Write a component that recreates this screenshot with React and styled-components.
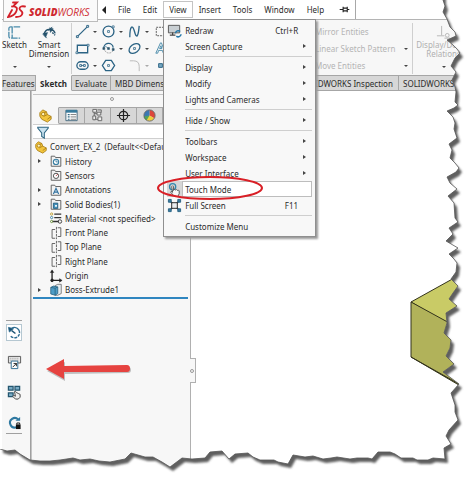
import React from "react";
import styled, { createGlobalStyle, css } from "styled-components";

const MENU_GROUPS = [
    [
        { label: "Redraw", shortcut: "Ctrl+R", icon: "redraw" },
        { label: "Screen Capture", sub: true },
    ],
    [
        { label: "Display", sub: true },
        { label: "Modify", sub: true },
        { label: "Lights and Cameras", sub: true },
    ],
    [{ label: "Hide / Show", sub: true }],
    [
        { label: "Toolbars", sub: true },
        { label: "Workspace", sub: true },
        { label: "User Interface", sub: true },
        { label: "Touch Mode", icon: "touch", active: true },
        { label: "Full Screen", shortcut: "F11", icon: "full" },
    ],
    [{ label: "Customize Menu" }],
];

const TREE = [
    { label: "History", icon: "history", open: true },
    { label: "Sensors", icon: "sensors" },
    { label: "Annotations", icon: "annotations", open: true },
    { label: "Solid Bodies(1)", icon: "solid", open: true },
    { label: "Material <not specified>", icon: "material" },
    { label: "Front Plane", icon: "plane" },
    { label: "Top Plane", icon: "plane" },
    { label: "Right Plane", icon: "plane" },
    { label: "Origin", icon: "origin" },
    { label: "Boss-Extrude1", icon: "boss", open: true },
];

const SKETCH_TOOLS = [
    "line", "circle", "spline", "select",
    "rect", "arc", "ellipse", "text",
    "slot", "polygon", "fillet", "point",
];

const NO_CARET = ["polygon", "select", "text", "point"];

const BLUE = "#2b6384";

const GLYPHS = {
    sketch: <path d="M14 2H4Q2 2 2 4V12Q2 14 4 14H14M5.500 2V14" fill="none" stroke="#4b8cab" strokeWidth="1.4" strokeDasharray="7 1" />,
    dimension: (
        <g fill="none" stroke="#26536d" strokeWidth="1.5">
            <path d="M2 10Q4 4 9 5Q13 5 14 9" />
            <path d="M5 14 1 10M7 6 11 2" strokeWidth="1" />
            <path d="M1 9 6 8 4 13zM8 3 12 4 9 8z" fill="#26536d" strokeWidth=".5" />
            <path d="M11 8 14 11" strokeDasharray="2 1" />
        </g>
    ),
    line: (
        <g stroke={BLUE} fill="#fff">
            <path d="M3 13 13 3" strokeWidth="1.3" />
            <path d="M1.500 12.500h2v2h-2zM12.500 1.500h2v2h-2z" />
        </g>
    ),
    circle: (
        <g stroke={BLUE} fill="none">
            <circle cx="8" cy="8" r="5.8" strokeWidth="1.4" />
            <path d="M7 7h2v2H7zM12 2h2v2h-2z" fill="#fff" strokeWidth=".8" />
        </g>
    ),
    spline: <path d="M3 14C3 2 6 0 8 8S12 14 13 2" stroke={BLUE} fill="none" strokeWidth="1.4" />,
    select: <path d="M3.5 3.5h9v9h-9z" stroke="#555" fill="none" strokeDasharray="2 1" />,
    rect: (
        <g stroke={BLUE} fill="#fff">
            <path d="M2.500 4.500h11v8h-11z" fill="none" strokeWidth="1.4" />
            <path d="M1 11.500h2v2H1zM13 3.500h2v2h-2z" strokeWidth=".8" />
        </g>
    ),
    arc: (
        <g stroke={BLUE} fill="none">
            <path d="M3 8a5 5 0 0 1 10-1" strokeWidth="1.4" />
            <path d="M4 10a5 5 0 0 0 9 0" stroke="#999" strokeDasharray="2 1" />
            <path d="M7 7h2v2H7zM2 7h2v2H2zM12 8h2v2h-2zM8 8 4 5" fill="#444" strokeWidth=".7" />
        </g>
    ),
    ellipse: (
        <g stroke={BLUE} fill="none">
            <ellipse cx="8" cy="8" rx="6.5" ry="4.4" transform="rotate(-38 8 8)" strokeWidth="1.4" />
            <path d="M7 7h2v2H7z" strokeWidth=".8" />
        </g>
    ),
    text: <path d="M3 13 8 2h1l4 11h-2l-1-3H6l-1 3zM7 8h2.500L8.500 5z" stroke="#4b8cab" fill="none" />,
    slot: (
        <g stroke={BLUE} fill="none">
            <rect x="2" y="4" width="12" height="8" rx="4" strokeWidth="1.4" />
            <path d="M5 7h2v2H5zM9 7h2v2H9zM7 8h2" strokeWidth=".9" />
        </g>
    ),
    polygon: (
        <g stroke={BLUE} fill="none">
            <path d="M5 2.500h6l3.500 5.500-3.500 5.500H5L1.500 8z" strokeWidth="1.4" />
            <path d="M7 7h2v2H7z" strokeWidth=".8" />
        </g>
    ),
    fillet: <path d="M3 3H7Q13 3 13 9V14" stroke="#b9b9b9" fill="none" />,
    point: <path d="M6 6h4v4H6z" fill="#78a9c2" stroke={BLUE} />,
    relations: (
        <g stroke="#b5b5b5" fill="none">
            <path d="M6 1V11M1 11.500H9" />
            <circle cx="12" cy="11" r="2" />
            <path d="M9 14h6" />
        </g>
    ),
    part: (
        <g stroke="#a67b13" strokeWidth=".9">
            <path d="M2 5 5 2 9 4 10 7 14 9V12L10 15 4 12Q1 9 2 5z" fill="#f2c43c" />
            <path d="M5 6 9 4M6 9 10 7M10 12 14 9" fill="none" />
            <circle cx="5.500" cy="6.500" r="1.800" fill="#fff3bd" />
        </g>
    ),
    list: (
        <g>
            <path d="M2 2.500h12v11H2z" fill="#fff" stroke="#44697e" />
            <path d="M2 2h12v3H2z" fill="#397b9c" />
            <path d="M4 7h2M4 9.500h2M4 12h2" stroke="#2e6682" strokeWidth="1.3" />
            <path d="M7 7h6M7 9.500h6M7 12h6" stroke="#777" />
        </g>
    ),
    config: (
        <g fill="#eee" stroke="#666">
            <path d="M4.500 2.500V13M4.500 6H8M4.500 12H9" fill="none" />
            <path d="M3 1.500h4v3H3zM7.500 4.500h4v3h-4zM3 8.500h3v4H3zM8.500 9.500h4v4h-4z" />
            <path d="M8 2h4v3" fill="none" />
        </g>
    ),
    target: (
        <g stroke="#222" fill="none" strokeWidth="1.3">
            <circle cx="8" cy="8" r="4.500" />
            <path d="M8 1v14M1 8h14" />
        </g>
    ),
    palette: (
        <g>
            <path d="M8 8V2a6 6 0 0 1 5 9z" fill="#dd463b" />
            <path d="M8 8 13 11A6 6 0 0 1 3 11z" fill="#f0cf3c" />
            <path d="M8 8 3 11A6 6 0 0 1 8 2z" fill="#3b78b3" />
            <path d="M8 8 2 9a6 6 0 0 0 3 4z" fill="#51a35b" />
            <circle cx="8" cy="8" r="6" fill="none" stroke="#555" strokeWidth=".8" />
        </g>
    ),
    funnel: <path d="M2 2.500h12v1L9.500 9v6l-3-2V9L2 3.500z" fill="#c9e2ef" stroke="#2e6682" strokeWidth="1.200" />,
    history: (
        <g stroke="#555" fill="none">
            <path d="M2.500 14V2.500h4l1 1.500h6v10z" fill="#f2f2f2" />
            <circle cx="8" cy="9" r="3" fill="#fff" stroke="#3a7fa2" strokeWidth="1.3" />
            <path d="M8 7v2h2" stroke="#3a7fa2" />
        </g>
    ),
    sensors: (
        <g stroke="#555" fill="none">
            <path d="M2.500 14V2.500h4l1 1.500h6v10z" fill="#f2f2f2" />
            <circle cx="8" cy="9" r="3" fill="#fff" stroke="#444" />
            <path d="M8 9 10 7" stroke="#b03030" />
        </g>
    ),
    annotations: (
        <g stroke="#555" fill="none">
            <path d="M2.500 14V2.500h4l1 1.500h6v10z" fill="#f2f2f2" />
            <path d="M5 12.500 8 6l3 6.500M6 10.500h4" stroke="#3272a0" strokeWidth="1.3" />
        </g>
    ),
    solid: (
        <g stroke="#555" fill="none">
            <path d="M2.500 14V2.500h4l1 1.500h6v10z" fill="#f2f2f2" />
            <path d="M5 7h5v6H5z" fill="#4593bd" stroke="#235d7e" />
            <path d="M7 9h2v2H7z" fill="#fff" stroke="none" />
        </g>
    ),
    material: (
        <g stroke="#333" fill="none">
            <path d="M6 3.500h8M6 7.500h8M4 12h7" strokeWidth="1.500" />
            <circle cx="3" cy="3.500" r="1.300" stroke="#bd9a28" />
            <circle cx="3" cy="7.500" r="1.300" stroke="#3a7fa2" />
            <circle cx="3" cy="12" r="1.300" stroke="#678d33" />
            <circle cx="12.500" cy="12" r="2" />
        </g>
    ),
    plane: (
        <g stroke="#555" fill="none">
            <path d="M3.500 4V14M3.500 4H7M3.500 14H7M13.500 2V12M13.500 2H10M13.500 12H10" />
            <path d="M8.500 1V15" strokeDasharray="3 1" />
        </g>
    ),
    origin: (
        <g stroke="#222" fill="#222">
            <path d="M3.500 2V13H14" fill="none" strokeWidth="1.500" />
            <path d="M1.500 4 3.500 1 5.500 4zM12 11 15 13 12 15z" strokeWidth=".5" />
            <circle cx="3.500" cy="13" r="1.500" />
        </g>
    ),
    boss: (
        <g stroke="#285f7d" strokeWidth=".9">
            <path d="M7 3 10 1.500H14V12L10 14H7z" fill="#e6edf1" stroke="#666" />
            <path d="M2 5 5 3.500 10 4.500V12L7 14 2 12.500z" fill="#4e9dc7" />
            <path d="M2 5 7 6 10 4.500M7 6V14" fill="none" />
        </g>
    ),
    redraw: (
        <g>
            <path d="M1.500 2.500h12v8h-12z" fill="#c9cfd3" stroke="#555" />
            <path d="M3 13h6M6 10v3" stroke="#444" strokeWidth="1.300" />
            <path d="M9 11a3 3 0 0 1 5-2M15 12a3 3 0 0 1-5 2" fill="none" stroke="#2478a9" strokeWidth="1.600" />
        </g>
    ),
    touch: (
        <g stroke="#444" fill="#f7f7f7" strokeWidth=".9">
            <circle cx="6" cy="5" r="3.300" fill="none" stroke="#3187ad" strokeWidth="1.400" />
            <path d="M5 5q1-2 2 0v4l1-1 1 .5 1-.5 1 1 1-.5 1 1v3l-1.500 3H8L4 11q0-2 2 0z" />
        </g>
    ),
    full: (
        <g stroke="#222" fill="#3c7da0">
            <path d="M4 4 12 12M12 4 4 12" strokeWidth="1.200" />
            <path d="M5 5h6v6H5z" fill="#e9edf0" />
            <path d="M1.500 1.500h3v3h-3zM11.500 1.500h3v3h-3zM1.500 11.500h3v3h-3zM11.500 11.500h3v3h-3z" stroke="#2b6384" />
        </g>
    ),
    undo: (
        <g stroke="#2d6c91" fill="none" strokeWidth="1.500">
            <path d="M5 3.500A5.500 5.500 0 1 1 4 12" strokeDasharray="12 1 3 1 3 1" />
            <path d="M1.500 2.500 2.500 7.500 7 4z" fill="#1e5474" strokeWidth=".8" />
            <path d="M5 6 9 9" stroke="#1e5474" strokeWidth="1.500" />
        </g>
    ),
    toolbar: (
        <g stroke="#555" fill="#e8e8e8">
            <path d="M1.500 1.500h13v7h-13z" />
            <path d="M3 3.500h10M3 5.500h10" stroke="#999" strokeDasharray="1 1" />
            <path d="M4.500 6.500h7v8h-7z" fill="#fff" stroke="#2d6c91" />
            <path d="M6 13 10 9M7 9h3v3" fill="none" stroke="#222" />
        </g>
    ),
    grid: (
        <g stroke="#24566f" fill="#78aac4">
            <path d="M1.500 1.500h5v4h-5zM8.500 1.500h5v4h-5zM1.500 8.500h5v4h-5z" strokeWidth="1.300" />
            <path d="M8 7q1-1 2 1l2 1 2 1v3l-2 2h-3l-3-3q1-2 3 0z" fill="#eee" stroke="#444" />
        </g>
    ),
    lock: (
        <g>
            <path d="M12 5A5 5 0 1 0 10 13" fill="none" stroke="#2f79a1" strokeWidth="2.200" />
            <path d="M9 6h5V2z" fill="#2f79a1" />
            <path d="M9.500 10h5v5h-5z" fill="#111" />
            <path d="M10.500 10V8.500h3V10" fill="none" stroke="#111" />
        </g>
    ),
    pin: <path d="M1 8H6M6 4V12M6 6H12V10H6M12 4V12M12 8h3" fill="none" stroke="#222" strokeWidth="1.600" />,
};

// right side goes down, then the bottom edge back to the left
const TORN_EDGE =
    "M0 -9H443V0L445 6 443 12 447 19 450 27 455 32 456 36 447 40 453 45 457 49 460 53 455 58 451 66 456 72 452 80 455 87 456 92 455 102 458 105 " +
    "454 108 447 111 453 117 455 123 454 129 457 138 449 144 452 150 450 158 455 163 459 168 456 172 447 177 450 183 457 189 448 196 454 203 455 218 458 222 449 228 453 234 " +
    "446 241 458 248 449 254 454 259 457 263 456 272 451 279 458 286 453 293 449 299 457 306 446 313 447 323 444 333 451 340 450 348 446 356 454 364 443 372 459 384 451 393 455 405 " +
    "455 412 458 420 449 430 446 436 451 444 444 448 445 459 433 458 428 460 417 460 413 458 401 458 395 454 390 452 378 452 372 459 368 458 357 458 350 459 337 457 331 458 323 459 313 456 305 457 " +
    "293 455 288 464 278 462 274 460 260 460 253 457 248 453 235 454 229 459 222 451 210 452 205 458 192 459 182 458 170 467 162 462 153 457 145 457 131 453 125 459 " +
    "110 462 99 461 90 459 80 460 73 458 60 460 50 461 40 461 30 460 20 454 15 450 7 451 0 449Z";

function Glyph({ name, size = 14 }) {
    return (
        <svg width={size} height={size} viewBox="0 0 16 16" aria-hidden="true">
            {GLYPHS[name]}
        </svg>
    );
}

function ViewMenu() {
    return (
        <MenuPanel>
            {MENU_GROUPS.map((group, i) => (
                <MenuGroup key={i}>
                    {group.map((item) => (
                        <MenuItem key={item.label} type="button">
                            <IconCell $active={item.active}>
                                {item.icon && <Glyph name={item.icon} size={15} />}
                            </IconCell>
                            <ItemBody $active={item.active}>
                                <span>{item.label}</span>
                                {item.shortcut && <Shortcut>{item.shortcut}</Shortcut>}
                                {item.sub && <Arrow />}
                            </ItemBody>
                            {item.active && (
                                <Ring viewBox="0 0 108 26" aria-hidden="true">
                                    <ellipse cx="54" cy="13" rx="52" ry="11" fill="none" stroke="#d91f26" strokeWidth="2" />
                                </Ring>
                            )}
                        </MenuItem>
                    ))}
                </MenuGroup>
            ))}
        </MenuPanel>
    );
}

function Header() {
    return (
        <TopBar>
            <Logo>
                <svg width="20" height="20" viewBox="0 0 20 20" aria-hidden="true">
                    <g fill="none" stroke="#d3222b" strokeWidth="1.800" strokeLinecap="round">
                        <path d="M6 1.500H10L7 4.500M5 5.500Q12 5 9 11Q7 15 1 16L5 9" />
                        <path d="M18 5.500Q13 4.500 12.500 7.500C12.500 10 17 10 15 13.500Q14 16 9 16" />
                    </g>
                </svg>
                <Brand><b>SOLID</b>WORKS</Brand>
            </Logo>
            <Collapse type="button" aria-label="Collapse menu" />
            <MenuBar>
                <MenuButton type="button">File</MenuButton>
                <MenuButton type="button">Edit</MenuButton>
                <MenuAnchor>
                    <MenuButton type="button" $open>View</MenuButton>
                    <ViewMenu />
                </MenuAnchor>
                <MenuButton type="button">Insert</MenuButton>
                <MenuButton type="button">Tools</MenuButton>
                <MenuButton type="button">Window</MenuButton>
                <MenuButton type="button">Help</MenuButton>
            </MenuBar>
            <PinButton type="button" aria-label="Pin menu"><Glyph name="pin" size={11} /></PinButton>
        </TopBar>
    );
}

function Ribbon() {
    return (
        <RibbonBar>
            <BigTool type="button" $width={25}>
                <Glyph name="sketch" size={15} />
                <span>Sketch</span>
                <Caret />
            </BigTool>
            <BigTool type="button" $width={44}>
                <Glyph name="dimension" size={15} />
                <span>Smart Dimension</span>
                <Caret />
            </BigTool>
            <ToolGrid>
                {SKETCH_TOOLS.map((name) => (
                    <SmallTool key={name} type="button" aria-label={name}>
                        <Glyph name={name} size={15} />
                        {!NO_CARET.includes(name) && <Caret $dim={name === "fillet"} />}
                    </SmallTool>
                ))}
            </ToolGrid>
            <EntityList>
                <EntityTool type="button">Mirror Entities</EntityTool>
                <EntityTool type="button">Linear Sketch Pattern <Caret /></EntityTool>
                <EntityTool type="button">Move Entities <Caret /></EntityTool>
            </EntityList>
            <BigTool type="button" $width={61} $disabled>
                <Glyph name="relations" size={15} />
                <span>Display/Delete Relations</span>
                <Caret />
            </BigTool>
        </RibbonBar>
    );
}

function FeatureTree() {
    return (
        <Panel>
            <PanelGrip><Dot /></PanelGrip>
            <PanelTabs>
                {["part", "list", "config", "target", "palette"].map((name, i) => (
                    <PanelTab key={name} type="button" aria-label={name} $active={i === 0}>
                        <Glyph name={name} size={15} />
                    </PanelTab>
                ))}
            </PanelTabs>
            <Filter>
                <Glyph name="funnel" />
                <input type="text" aria-label="Filter tree" />
            </Filter>
            <RootNode>
                <Glyph name="part" />
                Convert_EX_2&nbsp; (Default&lt;&lt;Default
            </RootNode>
            <Tree>
                {TREE.map((node) => (
                    <Node key={node.label}>
                        <Toggle>{node.open && <Arrow />}</Toggle>
                        <Glyph name={node.icon} />
                        <span>{node.label}</span>
                    </Node>
                ))}
            </Tree>
            <RollbackBar />
            <PointerArrow viewBox="0 0 90 28" aria-hidden="true">
                <path d="M3 14 21 5V11L84 10Q87 10 87 13T84 16L21 17V24Z" fill="#999" opacity=".6" />
                <path d="M2 12 20 2V9L83 8Q86 8 86 11.500T83 15L20 15V22Z" fill="#e64340" />
            </PointerArrow>
            <Splitter type="button" aria-label="Collapse panel"><Dot /></Splitter>
        </Panel>
    );
}

function TornEdge() {
    return (
        <EdgeOverlay viewBox="0 0 474 479" preserveAspectRatio="none" aria-hidden="true">
            <defs>
                <clipPath id="outside">
                    <path d={"M-9 -9H490V490H-9Z" + TORN_EDGE} clipRule="evenodd" />
                </clipPath>
                <filter id="soft" x="-5%" y="-5%" width="110%" height="110%">
                    <feGaussianBlur stdDeviation="1" />
                </filter>
            </defs>
            <g clipPath="url(#outside)">
                <path d="M-9 -9H490V490H-9Z" fill="#fff" />
                <g filter="url(#soft)">
                    <path d={TORN_EDGE} fill="#5e5e5e" transform="translate(3 4)" />
                </g>
            </g>
            <path d={TORN_EDGE} fill="none" stroke="#555" strokeWidth=".8" />
            <path d="M0 0H2V449H0Z" fill="#fff" />
        </EdgeOverlay>
    );
}

export default function App() {
    return (
        <Frame>
            <GlobalStyle />
            <Header />
            <Ribbon />
            <Tabs>
                <Tab type="button" $left>Features</Tab>
                <Tab type="button" $active>Sketch</Tab>
                <Tab type="button">Evaluate</Tab>
                <Tab type="button" $left>MBD Dimensions</Tab>
                <Tab type="button">SOLIDWORKS Inspection</Tab>
                <Tab type="button" $left>SOLIDWORKS</Tab>
            </Tabs>
            <Workspace>
                <Dock>
                    <DockGroup>
                        <DockButton type="button" aria-label="Undo" $active><Glyph name="undo" size={15} /></DockButton>
                        <DockButton type="button" aria-label="Toolbar"><Glyph name="toolbar" size={15} /></DockButton>
                        <DockButton type="button" aria-label="Multi select"><Glyph name="grid" size={15} /></DockButton>
                        <DockButton type="button" aria-label="Lock rotation"><Glyph name="lock" size={15} /></DockButton>
                    </DockGroup>
                </Dock>
                <FeatureTree />
                <Viewport>
                    <Model viewBox="0 0 64 110" aria-hidden="true">
                        <g stroke="#33331c" strokeLinejoin="round">
                            <path d="M1 26 46 1H60V57H53Z" fill="#c9cb66" />
                            <path d="M1 26 54 55V112L1 81Z" fill="#b1b25a" />
                            <path d="M1 81 49 108" fill="none" />
                        </g>
                    </Model>
                </Viewport>
            </Workspace>
            <TornEdge />
        </Frame>
    );
}

const GlobalStyle = createGlobalStyle`
    * {
        box-sizing: border-box;
    }

    body {
        margin: 0;
        background: #fff;
        color: #2b2b2b;
        font-family: "Noto Sans", "Open Sans", sans-serif;
        font-size: 8px;
        line-height: 9px;
    }

    button, input {
        margin: 0;
        padding: 0;
        border: none;
        background: none;
        color: inherit;
        font: inherit;
    }

    svg {
        display: block;
        flex: none;
    }
`;

const Frame = styled.div`
    position: relative;
    display: flex;
    flex-direction: column;
    min-height: 100vh;
    overflow: hidden;
    background: #fff;
`;

const TopBar = styled.header`
    display: flex;
    height: 20px;
    padding-left: 3px;
    border-bottom: 1px solid #b4b4b4;
`;

const Logo = styled.div`
    position: relative;
    z-index: 2;
    display: flex;
    align-items: center;
    gap: 2px;
    width: 95px;
    height: 22px;
    padding-left: 3px;
    border: 1px solid #bcbcbc;
    border-top: none;
    background: #fafafa;
`;

const Brand = styled.span`
    padding-top: 3px;
    color: #cf2a31;
    font-family: "Open Sans", sans-serif;
    font-size: 10px;
    font-style: italic;

    b {
        font-weight: 800;
    }
`;

const Collapse = styled.button`
    align-self: center;
    margin: 0 6px 0 4px;
    border: 4px solid transparent;
    border-left: none;
    border-right: 4px solid #222;
`;

const MenuBar = styled.nav`
    display: flex;
    align-items: center;
`;

const MenuAnchor = styled.div`
    position: relative;
`;

const MenuButton = styled.button`
    height: 17px;
    padding: 0 5px;
    border: 1px solid ${({ $open }) => ($open ? "#c4c4c4" : "transparent")};
    background: ${({ $open }) => ($open ? "#fff" : "none")};
`;

const PinButton = styled.button`
    display: flex;
    align-items: center;
    padding: 0 5px 0 9px;
    border-right: 1px solid #a8a8a8;
`;

const MenuPanel = styled.div`
    position: absolute;
    z-index: 3;
    top: 18px;
    left: 0;
    width: 153px;
    padding: 2px 3px;
    border: 1px solid #8f8f8f;
    background: #f8f8f8;
    box-shadow: 2px 2px 2px #9a9a9a;
`;

const MenuGroup = styled.div`
    & + &::before {
        content: "";
        display: block;
        height: 1px;
        margin: 2px 0 2px 18px;
        background: #cfcfcf;
    }
`;

const MenuItem = styled.button`
    position: relative;
    display: flex;
    width: 100%;
    height: 16px;
    text-align: left;
`;

const IconCell = styled.span`
    display: flex;
    align-items: center;
    justify-content: center;
    width: 15px;
    background: ${({ $active }) => ($active ? "#d6d6d6" : "none")};
`;

const ItemBody = styled.span`
    flex: 1;
    display: flex;
    align-items: center;
    justify-content: space-between;
    padding: 0 5px 0 2px;
    border: 1px solid transparent;

    ${({ $active }) => $active && css`
        border-color: #bdbdbd;
        background: #fff;
    `}
`;

const Shortcut = styled.span`
    margin-right: 8px;
`;

const Arrow = styled.i`
    border: 2px solid transparent;
    border-left: 3px solid #444;
    border-right: none;
`;

const Ring = styled.svg`
    position: absolute;
    top: -6px;
    left: -11px;
    width: 108px;
    height: 26px;
`;

const Caret = styled.i`
    border: 2px solid transparent;
    border-top-color: ${({ $dim }) => ($dim ? "#aaa" : "#444")};
    border-bottom: none;
`;

const RibbonBar = styled.section`
    display: flex;
    height: 55px;
    padding: 3px 0 1px 2px;
    background: #f7f7f7;
`;

const BigTool = styled.button`
    display: flex;
    flex-direction: column;
    align-items: center;
    flex: none;
    width: ${({ $width }) => $width}px;
    padding-top: 2px;
    color: ${({ $disabled }) => ($disabled ? "#b0b0b0" : "inherit")};

    ${Caret} {
        margin-top: auto;
        margin-bottom: 6px;
    }
`;

const ToolGrid = styled.div`
    display: grid;
    grid-template-columns: repeat(4, 26px);
    grid-template-rows: repeat(3, 17px);
    border-left: 1px solid #cfcfcf;
    padding-left: 3px;
`;

const SmallTool = styled.button`
    display: flex;
    align-items: center;
    gap: 3px;
`;

const EntityList = styled.div`
    display: grid;
    grid-template-rows: repeat(3, 17px);
    width: 98px;
    margin-left: auto;
    border-right: 1px solid #cfcfcf;
`;

const EntityTool = styled.button`
    display: flex;
    align-items: center;
    justify-content: space-between;
    padding-right: 4px;
    color: #b4b4b4;
`;

const Tabs = styled.nav`
    display: grid;
    grid-template-columns: 36px 36px 39px 1fr 104px 75px;
    height: 16px;
    padding-left: 0;
`;

const Tab = styled.button`
    overflow: hidden;
    padding-left: ${({ $left }) => ($left ? 4 : 0)}px;
    border: 1px solid #a6a6a6;
    border-left: none;
    background: #d7d7d7;
    text-align: ${({ $left }) => ($left ? "left" : "center")};
    white-space: nowrap;

    &:first-child {
        padding-left: 2px;
    }

    ${({ $active }) => $active && css`
        border-top-color: #f7f7f7;
        border-bottom-color: #f7f7f7;
        background: #f7f7f7;
        font-weight: 700;
    `}
`;

const Workspace = styled.main`
    flex: 1;
    display: flex;
`;

const Dock = styled.aside`
    width: 31px;
    padding: 229px 8px 0 6px;
    border-right: 1px solid #a0a0a0;
    background: #f7f7f7;
`;

const DockGroup = styled.div`
    display: flex;
    flex-direction: column;
    gap: 13px;
    padding: 3px 0 2px;
    border: 1px solid #a0a0a0;
    border-width: 1px 0;
`;

const DockButton = styled.button`
    display: flex;
    align-items: center;
    justify-content: center;
    height: 17px;
    border: 1px solid ${({ $active }) => ($active ? "#b5c7d1" : "transparent")};
    background: ${({ $active }) => ($active ? "#fff" : "none")};
`;

const Panel = styled.section`
    position: relative;
    z-index: 1;
    flex: none;
    width: 160px;
    padding-left: 1px;
    border-right: 1px solid #b0b0b0;
    border-left: 1px solid #c4c4c4;
    background: #f7f7f7;
`;

const PanelGrip = styled.div`
    display: flex;
    justify-content: center;
    height: 13px;
    margin-top: 3px;
    padding-top: 2px;
    border-top: 1px solid #c4c4c4;
`;

const Dot = styled.i`
    width: 4px;
    height: 4px;
    border: 1px solid #999;
    border-radius: 50%;
`;

const PanelTabs = styled.div`
    display: grid;
    grid-template-columns: repeat(6, 26px);
    height: 17px;
`;

const PanelTab = styled.button`
    display: flex;
    align-items: center;
    justify-content: center;
    border: 1px solid #a6a6a6;
    border-left: none;
    background: #d7d7d7;

    ${({ $active }) => $active && css`
        border-top-color: #f7f7f7;
        border-bottom-color: #f7f7f7;
        background: #f7f7f7;
    `}
`;

const Filter = styled.label`
    display: flex;
    align-items: center;
    height: 15px;
    padding-left: 3px;
    border: 1px solid #cfcfcf;
    border-left: none;
    background: #fff;

    input {
        flex: 1;
        min-width: 0;
        outline: none;
    }
`;

const RootNode = styled.div`
    display: flex;
    align-items: center;
    gap: 2px;
    height: 15px;
    padding-left: 1px;
    white-space: nowrap;
`;

const Tree = styled.ul`
    display: grid;
    min-height: 143px;
    margin: 0;
    padding: 0;
    list-style: none;
`;

const Node = styled.li`
    display: flex;
    align-items: center;
    gap: 2px;
    white-space: nowrap;
`;

const Toggle = styled.span`
    display: flex;
    width: 14px;
    padding-left: 5px;
`;

const RollbackBar = styled.div`
    height: 2px;
    margin-right: 2px;
    background: #2f86c0;
`;

const PointerArrow = styled.svg`
    position: absolute;
    top: 266px;
    left: 12px;
    width: 90px;
    height: 28px;
`;

const Splitter = styled.button`
    position: absolute;
    top: 267px;
    left: 100%;
    display: flex;
    align-items: center;
    width: 6px;
    height: 25px;
    border: 1px solid #b0b0b0;
    border-left: none;
    background: #f7f7f7;
`;

const Viewport = styled.div`
    position: relative;
    flex: 1;
    background: #fff;
`;

const Model = styled.svg`
    position: absolute;
    top: 185px;
    right: 0;
    width: 64px;
    height: 110px;
`;

const EdgeOverlay = styled.svg`
    position: absolute;
    z-index: 4;
    inset: 0;
    width: 100%;
    height: 100%;
    pointer-events: none;
`;
